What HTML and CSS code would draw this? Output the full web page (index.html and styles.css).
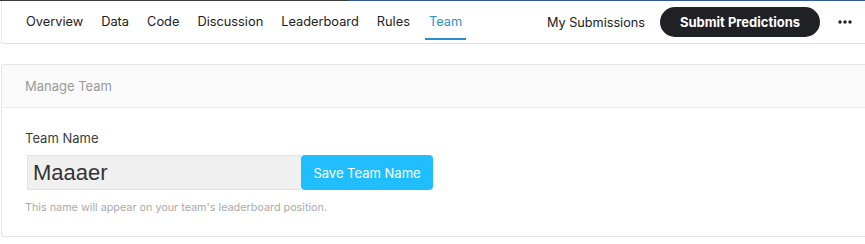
FILE: index.html
```html
<!DOCTYPE html>
<html>
<head>
<meta charset="utf-8">
<link rel="stylesheet" href="styles.css">
</head>
<body>
<div class="topline"><div class="topline-dark"></div><div class="topline-blue"></div></div>
<nav class="nav">
  <div class="tabs">
    <a class="tab">Overview</a>
    <a class="tab">Data</a>
    <a class="tab">Code</a>
    <a class="tab">Discussion</a>
    <a class="tab">Leaderboard</a>
    <a class="tab">Rules</a>
    <a class="tab active">Team</a>
  </div>
  <div class="actions">
    <a class="mysub">My Submissions</a>
    <button class="submit">Submit Predictions</button>
    <span class="more"><svg width="14" height="4" viewBox="0 0 14 4"><circle cx="2" cy="2" r="1.7" fill="#202124"/><circle cx="7" cy="2" r="1.7" fill="#202124"/><circle cx="12" cy="2" r="1.7" fill="#202124"/></svg></span>
  </div>
</nav>
<section class="card">
  <div class="card-head">Manage Team</div>
  <div class="card-body">
    <div class="label">Team Name</div>
    <div class="field">
      <div class="input">Maaaer</div>
      <button class="save">Save Team Name</button>
    </div>
    <div class="hint">This name will appear on your team's leaderboard position.</div>
  </div>
</section>
</body>
</html>
```
FILE: styles.css
```css
html, body { margin: 0; padding: 0; background: #fff; overflow: hidden; }
body { width: 865px; height: 244px; font-family: Inter, "Liberation Sans", sans-serif; }
.topline { display: flex; height: 1px; }
.topline-dark { width: 348px; background: #3a3a3a; }
.topline-blue { flex: 1; background: #34599a; }
.nav {
  display: flex; align-items: stretch; justify-content: space-between;
  height: 42px; margin-left: 1px;
  border-left: 1px solid #e8e8e8; border-bottom: 1px solid #e3e3e3;
  border-bottom-left-radius: 3px;
}
.tabs { display: flex; gap: 18px; padding-left: 24px; }
.tab {
  display: flex; align-items: center; font-size: 12.8px; color: #202124;
  padding: 2px 0 0 0; border-bottom: 2px solid transparent; height: 38px; box-sizing: border-box;
  margin-top: 1px;
}
.tab.active { color: #2f8fcf; border-bottom-color: #2a8ccc; padding: 2px 4px 0; margin-left: -3px; }
.actions { display: flex; align-items: center; padding-right: 13px; }
.mysub { font-size: 12.7px; color: #202124; margin-right: 15px; }
.submit {
  height: 30px; width: 160px; border: none; border-radius: 15px; background: #202124; color: #fff;
  font-family: Inter, "Liberation Sans", sans-serif; font-weight: 700; font-size: 13px; padding: 0;
  margin-bottom: 1px;
}
.more { display: flex; margin-left: 18px; }
.card {
  margin-top: 20px; margin-left: 1px;
  border: 1px solid #e6e6e6; border-right: none; border-radius: 3px 0 0 3px;
  height: 173px; box-sizing: border-box;
}
.card-head {
  height: 42px; background: #fafafa; border-bottom: 1px solid #ebebeb;
  display: flex; align-items: center; padding-left: 23px; font-size: 13px; color: #9a9a9a;
}
.card-body { padding: 21px 0 0 23px; }
.label { font-size: 13px; color: #3c3c3c; line-height: 18px; }
.field { display: flex; margin-top: 8px; margin-left: 2px; }
.input {
  width: 274px; height: 35px; box-sizing: border-box; background: #f0f0f0; border: 1px solid #e2e2e2;
  border-right: none; font-family: "Liberation Sans", Arial, sans-serif; font-size: 22px; color: #333;
  display: flex; align-items: center; padding-left: 5px;
}
.save {
  width: 132px; height: 35px; border: none; border-radius: 4px; background: #20beff; color: #fff;
  font-family: Inter, "Liberation Sans", sans-serif; font-size: 13px; padding: 0;
}
.hint { font-size: 10.8px; color: #aaaaaa; margin-top: 11px; }
```
